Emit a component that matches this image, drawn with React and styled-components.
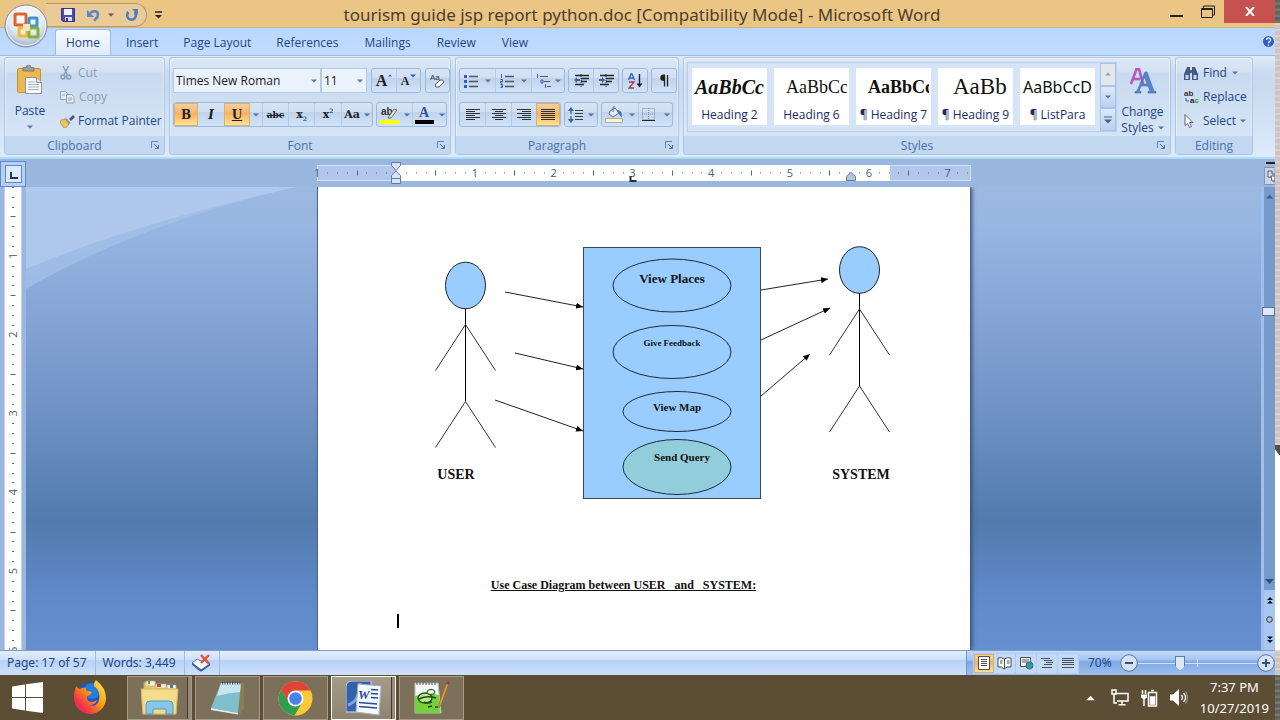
import React from 'react';
import styled, { createGlobalStyle, css } from 'styled-components';

const UI = '"Open Sans", "Noto Sans", sans-serif';
const WIDE = '"Noto Sans", "Open Sans", sans-serif';
const SERIF = '"Liberation Serif", "Times New Roman", serif';

const Global = createGlobalStyle`
  *, *::before, *::after { box-sizing: border-box; }
  html, body { margin: 0; padding: 0; }
  body { font-family: ${UI}; font-size: 12px; line-height: 16px; color: #1d4587; }
  button { font: inherit; color: inherit; margin: 0; padding: 0; border: 0; background: none; }
  svg { display: block; flex: none; }
`;

/* ---------- frame ---------- */
const Screen = styled.div`
  display: grid;
  grid-template-columns: minmax(0, 1fr) 5px;
  height: 100vh;
  overflow: hidden;
  background: #5c4d35;
`;
const WindowFrame = styled.div`
  display: flex;
  flex-direction: column;
  min-width: 0;
  min-height: 0;
`;
const EdgeStrip = styled.div`
  display: flex;
  flex-direction: column;
  > svg { width: 5px; height: 10px; }
`;
const Noise = styled.div`
  flex: ${p => p.$flex || 'none'};
  height: ${p => p.$h || 'auto'};
  background: ${p => p.$dark
    ? 'repeating-linear-gradient(#4e6b62 0 2px, #8d5a70 2px 3px, #6c7f58 3px 5px, #6a557c 5px 6px)'
    : 'repeating-linear-gradient(#e3cfc8 0 2px, #c3cbb0 2px 3px, #d9bfcb 3px 5px, #b9c8cf 5px 6px)'};
`;
const Blank = styled.div`
  flex: 195 0 0;
  background: #fff;
`;

/* ---------- title bar ---------- */
const Header = styled.header`
  position: relative;
  flex: none;
`;
const OfficeButton = styled.button`
  position: absolute;
  left: 4px;
  top: 4px;
  width: 44px;
  height: 44px;
`;
const TitleBar = styled.div`
  display: grid;
  grid-template-columns: 180px minmax(0, 1fr) auto;
  height: 28px;
  background: #ebc583;
  border-bottom: 1px solid #c9b48c;
`;
const QuickAccess = styled.div`
  display: flex;
  align-items: center;
  padding-left: 46px;
`;
const QuickPill = styled.div`
  display: flex;
  align-items: center;
  gap: 6px;
  width: 101px;
  height: 24px;
  padding-left: 14px;
  border: 1px solid #b79a6a;
  border-left-color: transparent;
  border-radius: 0 12px 12px 0;
  background: #e9cb97;
`;
const QuickMore = styled.button`
  margin-left: 8px;
`;
const Title = styled.h1`
  margin: 0;
  padding-right: 56px;
  font-family: ${WIDE};
  font-size: 17px;
  font-weight: 400;
  line-height: 30px;
  color: #4b3f2d;
  text-align: center;
  white-space: nowrap;
`;
const Controls = styled.div`
  display: flex;
  align-items: flex-start;
`;
const ControlButton = styled.button`
  display: flex;
  align-items: center;
  justify-content: center;
  width: ${p => p.$w}px;
  height: 23px;
  background: ${p => (p.$close ? '#c75050' : 'none')};
`;

/* ---------- tabs ---------- */
const TabBar = styled.nav`
  display: flex;
  align-items: flex-end;
  height: 27px;
  padding: 0 0 0 55px;
  background: linear-gradient(#b9d6fd, #c2dcff);
`;
const Tab = styled.button`
  height: 26px;
  padding: 2px ${p => p.$pad || 13}px 0;
  color: #1d4587;
  border-radius: 3px 3px 0 0;
  ${p => p.$active && css`
    margin-right: 2px;
    border: 1px solid #9dbde8;
    border-bottom: 0;
    background: linear-gradient(#f5faff, #e0ebf8);
    padding: 1px 10px 0;
  `}
`;
const HelpButton = styled.button`
  margin: 0 0 7px auto;
`;

/* ---------- ribbon ---------- */
const Ribbon = styled.div`
  display: flex;
  gap: 4px;
  flex: none;
  height: 104px;
  padding: 1px 0 2px 4px;
  background: linear-gradient(#dfeaf7 0, #cbdcf0 16px, #c9daef 30px, #dcebfb 100px);
  border-top: 1px solid #9dbce6;
  border-bottom: 2px solid #b4dbf6;
`;
const GroupBox = styled.section`
  display: flex;
  flex-direction: column;
  width: ${p => p.$w}px;
  border: 1px solid #aac5e6;
  border-radius: 3px;
  box-shadow: inset 0 0 0 1px rgba(255, 255, 255, 0.4);
  background: linear-gradient(#dde8f5 0, #d3e1f2 14px, #c8daef 15px, #d9e8f8 100%);
  overflow: hidden;
`;
const GroupBody = styled.div`
  flex: 1;
  display: flex;
  min-height: 0;
`;
const GroupLabel = styled.footer`
  display: grid;
  grid-template-columns: ${p => (p.$plain ? '0 1fr 0' : '0 1fr 20px')};
  align-items: center;
  height: 18px;
  padding-top: 2px;
  background: #c1d8f0;
  color: #4a70ad;
  text-align: center;
  > span { grid-column: 2; }
  > button { justify-self: end; margin-right: 4px; padding-bottom: 2px; }
`;
const Rows = styled.div`
  display: flex;
  flex-direction: column;
  gap: 9px;
  padding: 10px 3px 0;
`;
const Row = styled.div`
  display: flex;
  gap: ${p => p.$gap || 3}px;
  height: 25px;
`;
const Cluster = styled.div`
  display: flex;
  border: 1px solid #9cb9de;
  border-radius: 3px;
  background: linear-gradient(#d6e4f5 0, #d0dff2 40%, #bfd3ec 41%, #d2e3f6 100%);
  overflow: hidden;
`;
const Tool = styled.button`
  display: flex;
  align-items: center;
  justify-content: center;
  gap: ${p => p.$gap || 5}px;
  width: ${p => p.$w}px;
  border-left: ${p => (p.$sep ? '1px solid #b4cae6' : '0')};
  ${p => p.$active && css`
    background: linear-gradient(#f9d09c 0, #f8bd79 35%, #f9b060 45%, #ffe796 100%);
    box-shadow: inset 0 0 0 1px #d3b27a;
  `}
  ${p => p.$top && css`
    > svg { align-self: flex-start; margin-top: 5px; }
  `}
`;
const Select = styled.select`
  appearance: none;
  width: ${p => p.$w}px;
  padding: 0 2px;
  border: 1px solid #b3cae8;
  border-radius: 0;
  background: transparent;
  font: 12px/22px ${UI};
  color: #1b1b1b;
`;
const SelectWrap = styled.label`
  position: relative;
  display: flex;
  background: #eaf2fb;
  margin-left: ${p => p.$join ? '-4px' : '0'};
  > svg { position: absolute; right: 4px; top: 11px; }
`;

const PasteButton = styled.button`
  display: flex;
  flex-direction: column;
  align-items: center;
  width: 50px;
  padding-top: 7px;
  gap: 8px;
  > svg:last-child { margin-top: -2px; }
`;
const ActionList = styled.div`
  display: flex;
  flex-direction: column;
  padding: 3px 0 0 ${p => p.$pad}px;
`;
const Action = styled.button`
  display: flex;
  align-items: center;
  gap: ${p => p.$gap}px;
  height: 24px;
  color: ${p => (p.$off ? '#8d9cb1' : '#1d4587')};
  white-space: nowrap;
`;

const Gallery = styled.div`
  display: flex;
  margin: 4px 0 0 3px;
  height: 70px;
  border: 1px solid #b9d0ec;
  background: #d5e4f6;
`;
const Cards = styled.div`
  display: flex;
  gap: 7px;
  padding: 5px 5px 5px 4px;
`;
const StyleCard = styled.button`
  display: flex;
  flex-direction: column;
  align-items: center;
  justify-content: flex-start;
  gap: 6px;
  width: 75px;
  height: 57px;
  padding: 6px 2px 0;
  background: #fff;
  color: #1c2a66;
  overflow: hidden;
  white-space: nowrap;
`;
const Sample = styled.span`
  flex: none;
  width: 71px;
  height: 27px;
  overflow: hidden;
  color: #111;
  text-align: left;
  padding-left: ${p => p.$pad || 0}px;
  font: ${p => p.$font};
  line-height: 26px;
`;
const GalleryScroll = styled.div`
  display: grid;
  grid-template-rows: 1fr 1fr 1fr;
  width: 16px;
`;
const ScrollStep = styled.button`
  display: flex;
  align-items: center;
  justify-content: center;
  border: 1px solid #a9c3e6;
  background: ${p => (p.$off ? '#e3e6ea' : 'linear-gradient(#dce9f9, #b9d1f0)')};
`;
const ChangeStyles = styled.button`
  display: flex;
  flex-direction: column;
  align-items: center;
  justify-content: flex-start;
  width: 51px;
  padding-top: 10px;
  gap: 10px;
  white-space: nowrap;
`;
const InlineCaret = styled.span`
  display: flex;
  align-items: center;
  gap: 4px;
`;

/* ---------- rulers and document ---------- */
const RulerBar = styled.div`
  display: grid;
  grid-template-columns: 26px minmax(0, 1fr) 14px;
  flex: none;
  height: 28px;
  background: #9ab7df;
`;
const RulerCenter = styled.div`
  display: flex;
  justify-content: center;
`;
const CornerButton = styled.button`
  display: flex;
  align-items: center;
  justify-content: center;
  align-self: end;
  height: 26px;
  border: 1px solid #5f88cc;
  background: #b7cff2;
`;
const RulerToggle = styled.button`
  display: flex;
  flex-direction: column;
  justify-content: flex-end;
  padding: 0 0 1px 3px;
`;
const Workspace = styled.div`
  display: grid;
  grid-template-columns: 26px minmax(0, 1fr) 14px;
  flex: 1;
  min-height: 0;
`;
const SideRuler = styled.div`
  overflow: hidden;
  background: #9ab7df;
`;
const Canvas = styled.main`
  position: relative;
  display: flex;
  justify-content: center;
  min-width: 0;
  overflow: hidden;
  background: linear-gradient(#9cb9e1 0, #98b6e2 8%, #84a5d5 28%, #7294c6 46%, #527bae 72%, #5f89c8 88%, #668fd0 100%);
`;
const Swoosh = styled.svg`
  position: absolute;
  left: 0;
  top: 0;
`;
const Paper = styled.article`
  position: relative;
  width: 652px;
  background: #fff;
  box-shadow: -1px 0 0 #4c668f, 2px 0 4px #344c70;
  overflow: hidden;
`;
const Caption = styled.p`
  margin: 69px 40px 0 0;
  font: 700 12px/18px ${SERIF};
  color: #111;
  text-align: center;
  text-decoration: underline;
  white-space: pre;
`;
const InsertionPoint = styled.div`
  width: 2px;
  height: 14px;
  margin: 20px 0 0 79px;
  background: #000;
`;
const ScrollColumn = styled.div`
  display: flex;
  flex-direction: column;
  background: #769bcb;
  border-left: 3px solid #9fc0ee;
`;
const ScrollTrack = styled.div`
  flex: 1;
  display: flex;
  flex-direction: column;
  justify-content: space-between;
  align-items: center;
  padding: 7px 0 6px;
`;
const ScrollThumb = styled.div`
  align-self: stretch;
  height: 9px;
  border: 1px solid #55749e;
  background: #dfe8f5;
  margin-left: -2px;
`;
const Spacer = styled.div`
  flex: ${p => p.$n} 0 0;
`;
const Browse = styled.div`
  display: flex;
  flex-direction: column;
  align-items: center;
  justify-content: space-around;
  height: 60px;
  background: #a9c7f3;
`;

/* ---------- status bar ---------- */
const StatusBar = styled.footer`
  display: flex;
  flex: none;
  height: 25px;
  border-top: 1px solid #7e9cc6;
  background: linear-gradient(#e1edfc 0, #cfe1f9 35%, #b7d1f5 40%, #cfe2fb 100%);
  font-family: ${WIDE};
`;
const StatusItem = styled.span`
  display: flex;
  align-items: center;
  padding: 0 8px 0 7px;
  border-right: 1px solid #9cbbe6;
  white-space: nowrap;
`;
const StatusRight = styled.div`
  display: flex;
  align-items: center;
  margin-left: auto;
  padding-left: 6px;
  border-left: 1px solid #6e95d0;
  background: linear-gradient(#c4dafa 0, #a6c5f1 35%, #7fa9e4 45%, #9dbff0 100%);
`;
const Views = styled.div`
  display: flex;
  height: 21px;
  background: #c3d9f8;
  border: 1px solid #b3cdf2;
`;
const ZoomText = styled.span`
  width: 41px;
  padding-left: 9px;
  white-space: nowrap;
`;
const Zoom = styled.input`
  appearance: none;
  width: 119px;
  height: 20px;
  margin: 0;
  background:
    linear-gradient(#d9e7fb, #d9e7fb) center / 1px 8px no-repeat,
    linear-gradient(#cfe0f8, #cfe0f8) center / 100% 1px no-repeat;
  &::-webkit-slider-thumb {
    appearance: none;
    width: 10px;
    height: 15px;
    border: 1px solid #5d7cab;
    background: #dce8f8;
    clip-path: polygon(0 0, 100% 0, 100% 70%, 50% 100%, 0 70%);
  }
`;

/* ---------- taskbar ---------- */
const TaskBar = styled.footer`
  display: flex;
  flex: none;
  height: 45px;
  background: #5c4d35;
  color: #fff;
`;
const Launch = styled.button`
  display: flex;
  align-items: center;
  justify-content: center;
  width: ${p => p.$w}px;
`;
const Running = styled.button`
  display: flex;
  align-items: center;
  justify-content: center;
  width: 65px;
  margin: 1px 3px 0 0;
  border: 1px solid ${p => (p.$active ? '#fff' : '#a59a87')};
  background: ${p => (p.$active ? 'linear-gradient(#a59b88, #8f8470)' : '#7d705b')};
  box-shadow: ${p => (p.$stack ? 'inset -4px 0 0 -1px #978b77, inset -5px 0 0 -1px #453a28' : 'none')};
`;
const Tray = styled.div`
  display: flex;
  align-items: center;
  gap: 12px;
  margin-left: auto;
  padding-right: 6px;
  > svg:first-child { margin-right: 4px; }
`;
const Clock = styled.time`
  display: block;
  font-family: ${WIDE};
  font-size: 13px;
  line-height: 21px;
  text-align: center;
  white-space: nowrap;
`;

/* ---------- icons ---------- */
const Caret = ({ c = '#56749f' }) => (
  <svg width="6" height="4" viewBox="0 0 6 4"><path d="M0 .5h6L3 3.5z" fill={c} /></svg>
);
const CaretUp = ({ c = '#56749f', w = 6, h = 4 }) => (
  <svg width={w} height={h} viewBox="0 0 6 4"><path d="M0 3.5h6L3 .5z" fill={c} /></svg>
);
const Launcher = () => (
  <button aria-label="More options">
    <svg width="9" height="9" viewBox="0 0 9 9" fill="none" stroke="#6484b2">
      <path d="M.5 7V.5H7" /><path d="M3 3l4 4M7.5 4v3.5H4" stroke="#4f6f9f" />
    </svg>
  </button>
);
const OfficeLogo = () => (
  <svg width="44" height="44" viewBox="0 0 44 44">
    <defs>
      <radialGradient id="orb" cx=".5" cy=".3" r=".75"><stop offset="0" stopColor="#fff" /><stop offset=".55" stopColor="#e4e9f1" /><stop offset="1" stopColor="#9aa9c4" /></radialGradient>
    </defs>
    <circle cx="22" cy="22" r="21" fill="url(#orb)" stroke="#8090ac" />
    <circle cx="22" cy="22" r="19.5" fill="none" stroke="#fff" strokeOpacity=".8" />
    <g fill="none" strokeWidth="3">
      <rect x="11" y="10" width="11" height="11" rx="1" stroke="#dc6334" />
      <rect x="25" y="14" width="8" height="8" rx="1" stroke="#3c94cf" />
      <rect x="15" y="24" width="8" height="8" rx="1" stroke="#eebb2c" />
      <rect x="25" y="24" width="9" height="9" rx="1" stroke="#84b13b" />
    </g>
    <path d="M19 20h7v7h-7z" fill="#f5e7bd" />
  </svg>
);
const Save = () => (
  <svg width="14" height="14" viewBox="0 0 14 14"><path d="M.5.5h13v13H2L.5 12z" fill="#4b4cae" stroke="#34358b" /><path d="M3 1h8v6H3z" fill="#eef2fb" /><path d="M4 9h7v4H4z" fill="#d8dcea" /><path d="M5 10h2v3H5z" fill="#34358b" /></svg>
);
const Undo = () => (
  <svg width="13" height="13" viewBox="0 0 13 13" fill="none" stroke="#5a86ca" strokeWidth="2.6"><path d="M3 4c4-3 8-2 8 1.500s-2 4-4 6" /><path d="M0 1v7h7z" fill="#5a86ca" stroke="none" /></svg>
);
const Redo = () => (
  <svg width="13" height="13" viewBox="0 0 13 13" fill="none" stroke="#4d7cc6" strokeWidth="2.6"><path d="M3.500 3a4.400 4.400 0 1 0 6 0" /><path d="M7 0h6v6z" fill="#4d7cc6" stroke="none" /></svg>
);
const PasteIcon = () => (
  <svg width="26" height="30" viewBox="0 0 26 30">
    <rect x=".5" y="3.500" width="23" height="24" rx="1.500" fill="#eeb850" stroke="#c9923a" />
    <path d="M6 2.500h3a2.500 2.500 0 0 1 5 0h3V6H6z" fill="#9d9d9d" stroke="#686868" strokeWidth=".7" />
    <path d="M8.500 12.500h11l5 5v11h-16z" fill="#f8fafd" stroke="#8a95a8" /><path d="M19.500 12.500v5h5" fill="#dde4ee" stroke="#8a95a8" />
    <path d="M11 17h7M11 19.500h11M11 22h11M11 24.500h11" stroke="#a9b1bf" />
  </svg>
);
const CutIcon = () => (
  <svg width="12" height="14" viewBox="0 0 12 14" fill="none" stroke="#8798b3" strokeWidth="1.400"><path d="M3 0l4.500 9M8.500 0L4 9" /><circle cx="3" cy="11" r="2" /><circle cx="8.700" cy="11" r="2" /></svg>
);
const CopyIcon = () => (
  <svg width="15" height="14" viewBox="0 0 15 14" fill="#e5ebf4" stroke="#94a3ba"><path d="M.5 1.500h5l2 2v6h-7z" /><path d="M6.500 4.500h5l2.500 2v6.500H6.500z" /><path d="M2 5h3M8 8h4M8 10h4" /></svg>
);
const BrushIcon = () => (
  <svg width="15" height="13" viewBox="0 0 15 13"><path d="M9 4l4-4 2 2-4 4z" fill="#4e5472" /><path d="M6 3l5 5-2 1-4-5z" fill="#8c96b8" /><path d="M1 5c2 0 3-1 4-1l4 5c-1 2-3 4-5 4L0 8z" fill="#eec65a" stroke="#a5813a" strokeWidth=".7" /></svg>
);
const ListIcon = ({ kind }) => (
  <svg width="15" height="14" viewBox="0 0 15 14">
    {kind === 'multi' ? (
      <g><path d="M4 2.500h8M8 7.500h6M11 12.500h4" stroke="#4d5562" /><path d="M1.500 0v4M5 6h2v3H5zM9.500 10v4" stroke="#355fae" fill="none" /></g>
    ) : (
      <g><path d="M5 2.500h9M5 7.500h9M5 12.500h9" stroke="#4d5562" strokeWidth="1.300" />
        {kind === 'num' ? <path d="M1.500 0v4M.5 5.500h2v2h-2v1.500h2M.5 10.500h2v3h-2M1 12h1.500" stroke="#355fae" fill="none" />
          : <path d="M0 1h3v3H0zM0 6h3v3H0zM0 11h3v3H0z" fill="#355fae" />}</g>
    )}
  </svg>
);
const IndentIcon = ({ more }) => (
  <svg width="15" height="13" viewBox="0 0 15 13"><path d="M1 1.500h14M7 4.500h8M7 7.500h6M1 10.500h9" stroke="#20242b" strokeWidth="1.500" /><path d="M7 0v13" stroke="#20242b" strokeDasharray="1 1" /><path d={more ? 'M0 5h3V3l3 3-3 3V7H0z' : 'M6 5H3V3L0 6l3 3V7h3z'} fill="#355fae" /></svg>
);
const AlignIcon = ({ xs }) => (
  <svg width="14" height="12" viewBox="0 0 14 12" shapeRendering="crispEdges"><path d={xs.map(([a, b], i) => `M${a} ${i * 2 + 0.5}H${b}`).join('')} stroke="#2d3036" /></svg>
);
const L = [[0, 14], [0, 9], [0, 14], [0, 9], [0, 14], [0, 9]];
const C = [[0, 14], [3, 11], [0, 14], [3, 11], [0, 14], [3, 11]];
const R = [[0, 14], [5, 14], [0, 14], [5, 14], [0, 14], [5, 14]];
const J = [[0, 14], [0, 14], [0, 14], [0, 14], [0, 14], [0, 14]];
const SortIcon = () => (
  <svg width="15" height="16" viewBox="0 0 15 16" fill="none"><path d="M.5 7L3.500 0l3 7M1.500 5h4" stroke="#355fae" strokeWidth="1.300" /><path d="M1 9h5l-5 6h5" stroke="#a33c4a" strokeWidth="1.300" /><path d="M11.500 1v11" stroke="#222" strokeWidth="1.400" /><path d="M8.500 10.500h6l-3 4z" fill="#222" /></svg>
);
const PilcrowIcon = () => (
  <svg width="10" height="13" viewBox="0 0 10 13"><path d="M10 .5H4a3.300 3.300 0 0 0 0 6.500h2V.5z" fill="#222" /><path d="M5.500 1v11.500M8.500 1v11.500" stroke="#222" strokeWidth="1.300" /></svg>
);
const SpacingIcon = () => (
  <svg width="15" height="16" viewBox="0 0 15 16"><path d="M3 2v12" stroke="#355fae" strokeWidth="1.300" strokeDasharray="5 2" /><path d="M0 4l3-4 3 4zM0 12l3 4 3-4z" fill="#355fae" /><path d="M7 3.500h8M7 6.500h8M7 9.500h8M7 12.500h8" stroke="#3c4350" /></svg>
);
const BucketIcon = () => (
  <svg width="18" height="17" viewBox="0 0 18 17"><path d="M5 5l5-3 4 5-6 4-4-3z" fill="#e8edf5" stroke="#5a6d8d" /><path d="M8 6V1.500q1.500-2 2 0" fill="none" stroke="#5a6d8d" /><path d="M12 4c4 0 5 3 5 7-2 0-2-3-4-4z" fill="#3f6fb9" /><path d="M.5 12.500h17v4H.5z" fill="#fdf6c4" stroke="#8d93a0" strokeWidth=".7" /></svg>
);
const BorderIcon = () => (
  <svg width="13" height="13" viewBox="0 0 13 13" fill="none"><path d="M.5.500h12v11H.5zM6.500 0v12M0 6h13" stroke="#7d8da8" strokeDasharray="1 1" /><path d="M0 12.500h13" stroke="#222" /></svg>
);
const Glyph = styled.span`
  font: ${p => p.$i ? 'italic ' : ''}700 ${p => p.$s || 13}px/16px "DejaVu Serif", ${SERIF};
  color: #1b1f27;
  text-decoration: ${p => p.$deco || 'none'};
  sub, sup { font-size: 6px; color: #355fae; line-height: 0; }
`;
const PlainGlyph = styled(Glyph)`
  font-family: ${SERIF};
`;
const ColourMark = styled.span`
  display: flex;
  flex-direction: column;
  align-items: center;
  width: 19px;
  border-bottom: 4px solid ${p => p.$c};
  font: 700 14px/14px ${SERIF};
  color: ${p => p.$t};
`;
const HighlightIcon = () => (
  <svg width="18" height="14" viewBox="0 0 18 14"><text x="1" y="9" fontSize="10" fontFamily="Liberation Sans, sans-serif" fill="#333">ab</text><path d="M8 12l6-9 3 1-6 8z" fill="#ece9cf" stroke="#555" strokeWidth=".8" /></svg>
);
const EraserIcon = () => (
  <svg width="16" height="16" viewBox="0 0 16 16"><text x="0" y="7" fontSize="8" fontFamily="Liberation Sans, sans-serif" fill="#333">Aa</text><path d="M5 12l5-5q3-1 4 2l-5 5q-4 1-4-2z" fill="#fff" stroke="#556" /></svg>
);
const StylesIcon = () => (
  <svg width="28" height="26" viewBox="0 0 28 26"><path d="M2 16L7.500 1h2.500L14 16M4 11h7" fill="none" stroke="#b15bb6" strokeWidth="2.600" /><path d="M6 25v-1.500l2-.5 8-19h2l7 19 2 .5V25h-8v-1.500l2-.5-2-5h-7l-2 5 2 .5V25zM12.500 16h5.500l-2.500-7z" fill="#5586cd" fillRule="evenodd" stroke="#3f6bae" strokeWidth=".6" /></svg>
);
const FindIcon = () => (
  <svg width="14" height="13" viewBox="0 0 14 13"><path d="M3 0h3v3h2V0h3l3 7v6H8V6H6v7H0V7z" fill="#445a80" /><path d="M1.500 8h3v4h-3zM9.500 8h3v4h-3z" fill="#c7d6ee" /></svg>
);
const ReplaceIcon = () => (
  <svg width="15" height="14" viewBox="0 0 15 14" fontFamily="Liberation Sans, sans-serif" fontSize="8" fontWeight="700"><text x="0" y="6" fill="#333">ab</text><text x="6" y="13" fill="#222">a<tspan fill="#2a9a3c">c</tspan></text><path d="M2 8v3h3" fill="none" stroke="#355fae" /></svg>
);
const PointerIcon = () => (
  <svg width="11" height="14" viewBox="0 0 11 14"><path d="M1 .5v11l2.500-2 2 4 2-1-2-4H9z" fill="#fff" stroke="#5b6678" /></svg>
);
const HelpIcon = () => (
  <svg width="13" height="13" viewBox="0 0 13 13"><circle cx="6.500" cy="6.500" r="6" fill="#2a60c8" stroke="#d7e5fb" /><path d="M4.500 5a2 2 0 1 1 3 1.700q-1 .5-1 1.500M6.500 9.500v1.300" fill="none" stroke="#fff" strokeWidth="1.300" /></svg>
);
const RoundIcon = ({ plus }) => (
  <svg width="18" height="18" viewBox="0 0 18 18"><circle cx="9" cy="9" r="8.300" fill="#d4e2f6" stroke="#60779c" /><path d={plus ? 'M5 9h8M9 5v8' : 'M5 9h8'} stroke="#3d5070" strokeWidth="2" /></svg>
);
const ProofIcon = () => (
  <svg width="19" height="18" viewBox="0 0 19 18"><path d="M0 9l5-4 4 2 5-2 4 5-8 6-2-1z" fill="#f4f7fc" stroke="#5b7db8" /><path d="M0 9.500l7 6 2 1 9-6" fill="none" stroke="#3f62a4" strokeWidth="2" /><path d="M9 1l8 9M17 1L9 9" stroke="#e2523a" strokeWidth="2.400" /></svg>
);
const ViewIcon = ({ k }) => (
  <svg width="15" height="14" viewBox="0 0 15 14" fill="none" stroke="#4a4f58">
    {k === 0 && <g><path d="M1.500.500h11v13h-11z" fill="#fff" /><path d="M4 3.500h6M4 5.500h6M4 7.500h6M4 9.500h6" /></g>}
    {k === 1 && <g><path d="M1 2q4-1 6 1 3-2 7-1v9q-4-1-7 2-2-3-6-2z" fill="#fff" /><path d="M7.500 3v10M3 5h2.500M3 7h2.500M10 5h2.500M10 7h2.500" /></g>}
    {k === 2 && <g><path d="M1.500 1.500h10v9h-10z" fill="#fff" /><path d="M3 4h7M3 6h7" /><circle cx="10.500" cy="9.500" r="3.500" fill="#3f9a84" stroke="#2f65ad" /></g>}
    {k === 3 && <path d="M1 2.500h9M4 4.500h8M6 6.500h7M4 8.500h8M2 11.500h10" />}
    {k === 4 && <path d="M1 2.500h12M1 4.500h12M1 6.500h12M1 8.500h12M1 11.500h12" />}
  </svg>
);

const StartIcon = () => (
  <svg width="31" height="31" viewBox="0 0 31 31" fill="#fff"><path d="M0 4.500L13 2.500v12.500H0zM14 2.300L31 0v15H14zM0 16h13v12.500L0 26.500zM14 16h17v15L14 28.700z" /></svg>
);
const FirefoxIcon = () => (
  <svg width="35" height="35" viewBox="0 0 35 35">
    <defs><linearGradient id="fox" x1="1" y1="0" x2="0" y2="1"><stop offset="0" stopColor="#fff44f" /><stop offset=".45" stopColor="#ff980e" /><stop offset=".75" stopColor="#f5344b" /><stop offset="1" stopColor="#d5148a" /></linearGradient></defs>
    <circle cx="17" cy="16" r="13.500" fill="#2b50c8" /><circle cx="19" cy="11" r="8" fill="#1e7fe0" />
    <path d="M3 6q1 2 4 3 3-2 6-1-1 3 2 3l4 1q-1 3-5 4-1 5 4 6 4 0 6-2-2 6-9 5 9 3 11-5 2-9-5-14 0-4 2-6 10 8 10 18a16 16 0 0 1-32 0Q1 11 3 6z" fill="url(#fox)" />
  </svg>
);
const FolderIcon = () => (
  <svg width="38" height="36" viewBox="0 0 38 36">
    <path d="M3 2h11l2 4h19v28H2z" fill="#e9c868" stroke="#b99a45" /><path d="M5 1h9v5H5zM15 4h10v4H15zM26 5h9v4h-9z" fill="#f7f3dd" stroke="#b8a877" strokeWidth=".6" />
    <path d="M7 1h2v3H7z" fill="#4a9c55" /><path d="M16 4h4v3h-4z" fill="#d0433a" /><path d="M29 5h3v3h-3z" fill="#4079b8" />
    <path d="M0 9h37l-2 25H2z" fill="#f3dd8d" stroke="#d3b661" />
    <path d="M5 34V25q0-4 4-4h19q4 0 4 4v9h-7v-5H12v5z" fill="#86c6ea" stroke="#4f9aca" />
  </svg>
);
const NotepadIcon = () => (
  <svg width="35" height="34" viewBox="0 0 35 34"><path d="M29 2l5-1v27l-4 5-3-1z" fill="#8a7c55" /><path d="M11 2h20l-3 30L1 27z" fill="#7fbfcd" /><path d="M11 2h20l-1 9Q18 12 7 15z" fill="#c5e6ec" /><path d="M1 27l27 5v1.500L1 29z" fill="#e5f2f3" /><path d="M12 2h20" stroke="#444" strokeWidth="3" strokeDasharray="1 1.500" /></svg>
);
const ChromeIcon = () => (
  <svg width="35" height="35" viewBox="0 0 35 35"><circle cx="17.500" cy="17.500" r="17" fill="#fbc933" /><path d="M2.800 9A17 17 0 0 1 32.500 9.500H17.500L11 21z" fill="#e04436" /><path d="M2.800 9A17 17 0 0 0 16.500 34.500L24 22 17 25 11 21z" fill="#2f9e50" /><circle cx="17.500" cy="17.500" r="8" fill="#fff" /><circle cx="17.500" cy="17.500" r="6.300" fill="#4a80ec" /></svg>
);
const WordIcon = () => (
  <svg width="36" height="35" viewBox="0 0 36 35"><path d="M6 0h19v31H0V5q1-5 6-5z" fill="#3560ab" stroke="#cfdcf2" /><path d="M2 24Q14 20 14 2" fill="none" stroke="#7da3dc" strokeWidth="3" /><path d="M12 3l23 2-2 29-23-3z" fill="#f7f9fd" stroke="#9fb2d2" /><text x="12" y="18" fontFamily="Liberation Serif, serif" fontWeight="700" fontStyle="italic" fontSize="13" fill="#234d9d">W</text><path d="M25 8.500l7 .5M25 12.500l7 .5M25 16.500l7 .5M13 21.500l18 1.500M13 25.500l18 1.500" stroke="#234d9d" strokeWidth="1.600" /></svg>
);
const NppIcon = () => (
  <svg width="36" height="34" viewBox="0 0 36 34"><path d="M1 2h23l3 30H1z" fill="#f5f8f3" stroke="#b8c0b2" /><path d="M1 15q12-4 24-1l1 18H1z" fill="#77cf3e" /><path d="M3 1v3M6 1v3M9 1v3M12 1v3M15 1v3M18 1v3M21 1v3" stroke="#555" /><ellipse cx="11" cy="17" rx="7" ry="5" fill="#b7e88a" stroke="#1f4d1c" strokeWidth="1.300" /><ellipse cx="17" cy="11" rx="4" ry="2.500" fill="#e9f6df" stroke="#1f4d1c" /><path d="M5 18q8-4 17-1M10 21q3 2 8 0M14 26l4-1M21 26l3 0" fill="none" stroke="#1f4d1c" strokeWidth="1.600" /><path d="M35 2L27 24l-2 3v-4L33 1z" fill="#e5a33a" stroke="#8a5a22" strokeWidth=".6" /><circle cx="34" cy="2" r="1.500" fill="#9b3a34" /></svg>
);
const NetworkIcon = () => (
  <svg width="18" height="17" viewBox="0 0 18 17" fill="none" stroke="#fff" strokeWidth="1.500"><path d="M5 4.500h12v7.500H6M11 12v3M7.500 15.700h7" /><path d="M1 1h4v4H1zM3 5v9h3" /></svg>
);
const BatteryIcon = () => (
  <svg width="17" height="18" viewBox="0 0 17 18" fill="none" stroke="#fff" strokeWidth="1.500"><path d="M7.500 3.500h8v13.500h-8zM10 1.500h3" /><path d="M9.500 8h4v7h-4z" fill="#fff" /><path d="M1.500 1v4M4.500 1v4M3 10v7" /><path d="M0 5.500h6v3L4 10H2L0 8.500z" fill="#fff" stroke="none" /></svg>
);
const SoundIcon = () => (
  <svg width="18" height="17" viewBox="0 0 18 17" fill="none" stroke="#fff"><path d="M0 5.500h3L9 0v17l-6-5.500H0z" fill="#fff" stroke="none" /><path d="M11.500 6q2 2.500 0 5M13.500 4q4 4.500 0 9" strokeWidth="1.300" /><path d="M15.500 2.500q4 6 0 12" strokeOpacity=".5" /></svg>
);

/* ---------- rulers ---------- */
const INCH = 78.8;
const HorizontalRuler = () => {
  const zero = 84;
  const ticks = [];
  for (let i = -7; i <= 58; i++) if (i % 8 !== 0) ticks.push(i);
  return (
    <svg width="664" height="28" viewBox="0 1 664 28">
      <rect x="5.500" y="7.500" width="653" height="15" fill="#b1c8ec" stroke="#d3e2f7" />
      <rect x={zero} y="7" width="494" height="16" fill="#fff" />
      {ticks.map(i => {
        const x = Math.round(zero + (i * INCH) / 8) + 0.5;
        return i % 4 === 0
          ? <path key={i} d={`M${x} 12.500v5`} stroke="#55627c" />
          : <path key={i} d={`M${x} 14.500v1`} stroke="#55627c" />;
      })}
      <g fontFamily={UI} fontSize="11" fill="#505a70" textAnchor="middle">
        {[-1, 1, 2, 3, 4, 5, 6, 7].map(n => <text key={n} x={zero + n * INCH} y="19">{Math.abs(n)}</text>)}
      </g>
      <path d="M318.500 18v5h6" fill="none" stroke="#222e48" strokeWidth="2" />
      <g fill="#d8e4f5" stroke="#607ba6">
        <path d="M79.500 4.500h9v3l-4.500 5-4.500-5z" /><path d="M79.500 20.500v-3l4.500-4.500 4.500 4.500v3z" /><path d="M79.500 20.500h9v5h-9z" />
        <path d="M534.500 22.500v-4l4.500-4 4.500 4v4z" fill="#b6c4d8" />
      </g>
    </svg>
  );
};
const VerticalRuler = () => {
  const zero = -10;
  const ticks = [];
  for (let i = 1; i < 100; i++) if (i % 8 !== 0) ticks.push(i);
  return (
    <svg width="26" height="1000" viewBox="0 0 26 1000">
      <rect x="5" width="16" height="1000" fill="#fff" /><path d="M4.500 0v1000M21.500 0v1000" stroke="#bfd3f1" />
      {ticks.map(i => {
        const y = Math.round(zero + (i * INCH) / 8) + 0.5;
        return <path key={i} d={i % 4 === 0 ? `M10.500 ${y}h5` : `M12 ${y}h2`} stroke="#55627c" />;
      })}
      <g fontFamily={UI} fontSize="11" fill="#505a70" textAnchor="middle">
        {[1, 2, 3, 4, 5, 6].map(n => <text key={n} transform={`translate(17 ${zero + n * INCH}) rotate(-90)`}>{n}</text>)}
      </g>
    </svg>
  );
};

/* ---------- use case diagram ---------- */
const Actor = ({ x, y }) => (
  <g fill="none" stroke="#333" strokeWidth="1">
    <ellipse cx={x} cy={y} rx="20" ry="23.300" fill="#99ccff" stroke="#222" />
    <path d={`M${x} ${y + 23}V${y + 116}`} stroke="#000" />
    <path d={`M${x - 30} ${y + 85}L${x} ${y + 39}L${x + 30} ${y + 85}M${x - 30} ${y + 162}L${x} ${y + 116}L${x + 30} ${y + 162}`} />
  </g>
);
const arrows = [
  [505, 292, 583, 307], [515, 353, 583, 369], [495, 400, 583, 431],
  [761, 290, 828, 279], [761, 340, 830, 308], [761, 396, 810, 354],
];
const useCases = [
  { cx: 672, cy: 285.500, rx: 59, ry: 26.500, label: 'View Places', tx: 672, ty: 283, size: 13 },
  { cx: 672, cy: 352, rx: 59, ry: 26.500, label: 'Give Feedback', tx: 672, ty: 346, size: 9 },
  { cx: 677, cy: 411.500, rx: 54, ry: 20, label: 'View Map', tx: 677, ty: 411, size: 11 },
  { cx: 677, cy: 467, rx: 54, ry: 27.500, label: 'Send Query', tx: 682, ty: 461, size: 11, fill: '#92cddc' },
];
const Diagram = () => (
  <svg width="652" height="320" viewBox="318 187 652 320" role="img" aria-label="Use case diagram">
    <defs><marker id="tip" markerWidth="8" markerHeight="6" refX="7" refY="3" orient="auto" markerUnits="userSpaceOnUse"><path d="M0 0l7 3-7 3z" fill="#000" /></marker></defs>
    <rect x="583.500" y="247.500" width="177" height="251" fill="#99ccff" stroke="#3c4654" />
    {arrows.map(([a, b, c, d]) => <path key={b} d={`M${a} ${b}L${c} ${d}`} stroke="#222" markerEnd="url(#tip)" />)}
    <Actor x={465.5} y={285.5} />
    <Actor x={859.5} y={270} />
    {useCases.map(u => (
      <g key={u.label}>
        <ellipse cx={u.cx} cy={u.cy} rx={u.rx} ry={u.ry} fill={u.fill || '#99ccff'} stroke="#1d2b3d" />
        <text x={u.tx} y={u.ty} fontSize={u.size} textAnchor="middle" fontFamily={SERIF} fontWeight="700" fill="#111">{u.label}</text>
      </g>
    ))}
    <g fontFamily={SERIF} fontWeight="700" fontSize="14" fill="#111" textAnchor="middle">
      <text x="456" y="479">USER</text><text x="861" y="479">SYSTEM</text>
    </g>
  </svg>
);

const Group = ({ w, label, launcher = true, children }) => (
  <GroupBox $w={w} aria-label={label}>
    <GroupBody>{children}</GroupBody>
    <GroupLabel $plain={!launcher}><span>{label}</span>{launcher && <Launcher />}</GroupLabel>
  </GroupBox>
);

const styles = [
  ['Heading 2', `italic 700 20px ${SERIF}`, 1, 'AaBbCc'],
  ['Heading 6', `18px ${SERIF}`, 10, 'AaBbCc'],
  ['¶ Heading 7', `700 18px ${SERIF}`, 10, 'AaBbCc'],
  ['¶ Heading 9', `23px ${SERIF}`, 13, 'AaBb'],
  ['¶ ListPara', `16px ${WIDE}`, 1, 'AaBbCcD'],
];

export default function App() {
  return (
    <Screen>
      <Global />
      <WindowFrame>
        <Header>
          <TitleBar>
            <QuickAccess>
              <QuickPill>
                <button aria-label="Save"><Save /></button>
                <Tool aria-label="Undo" $w={38} $gap={8}><Undo /><Caret c="#665a46" /></Tool>
                <button aria-label="Redo"><Redo /></button>
              </QuickPill>
              <QuickMore aria-label="Customize toolbar">
                <svg width="7" height="8" viewBox="0 0 7 8"><path d="M0 1h7" stroke="#222" strokeWidth="1.500" /><path d="M0 4h7L3.500 7.500z" fill="#222" /></svg>
              </QuickMore>
            </QuickAccess>
            <Title>tourism guide jsp report python.doc [Compatibility Mode] - Microsoft Word</Title>
            <Controls>
              <ControlButton $w={32} aria-label="Minimize"><svg width="13" height="13" viewBox="0 0 13 13"><path d="M0 11h13" stroke="#222" strokeWidth="2" /></svg></ControlButton>
              <ControlButton $w={32} aria-label="Restore"><svg width="14" height="14" viewBox="0 0 14 14" fill="none" stroke="#222"><path d="M.5 3.500h11v9H.5zM.5 4.500h11M2.500 3V1h11v9h-2" /></svg></ControlButton>
              <ControlButton $w={51} $close aria-label="Close"><svg width="10" height="9" viewBox="0 0 10 9"><path d="M1 0l8 9M9 0L1 9" stroke="#fff" strokeWidth="2" /></svg></ControlButton>
            </Controls>
          </TitleBar>
          <TabBar>
            <Tab $active>Home</Tab>
            <Tab>Insert</Tab><Tab $pad={12}>Page Layout</Tab><Tab>References</Tab><Tab>Mailings</Tab><Tab>Review</Tab><Tab>View</Tab>
            <HelpButton aria-label="Help"><HelpIcon /></HelpButton>
          </TabBar>
          <OfficeButton aria-label="Office menu"><OfficeLogo /></OfficeButton>
        </Header>

        <Ribbon>
          <Group w={161} label="Clipboard">
            <PasteButton><PasteIcon /><span>Paste</span><Caret /></PasteButton>
            <ActionList $pad={5}>
              <Action $off $gap={6}><CutIcon />Cut</Action>
              <Action $off $gap={4}><CopyIcon />Copy</Action>
              <Action $gap={3}><BrushIcon />Format Painter</Action>
            </ActionList>
          </Group>

          <Group w={282} label="Font">
            <Rows>
              <Row $gap={4}>
                <SelectWrap><Select $w={148} aria-label="Font"><option>Times New Roman</option></Select><Caret /></SelectWrap>
                <SelectWrap $join><Select $w={46} aria-label="Font size"><option>11</option></Select><Caret /></SelectWrap>
                <Cluster>
                  <Tool $w={24} $gap={1} $top aria-label="Grow font"><PlainGlyph $s={16}>A</PlainGlyph><CaretUp c="#355fae" w={4} h={3} /></Tool>
                  <Tool $w={24} $gap={1} $sep $top aria-label="Shrink font"><PlainGlyph $s={12}>A</PlainGlyph><Caret c="#355fae" /></Tool>
                </Cluster>
                <Cluster><Tool $w={23} aria-label="Clear formatting"><EraserIcon /></Tool></Cluster>
              </Row>
              <Row>
                <Cluster>
                  <Tool $w={24} $active aria-label="Bold"><Glyph $s={12}>B</Glyph></Tool>
                  <Tool $w={26} aria-label="Italic"><Glyph $s={12} $i>I</Glyph></Tool>
                  <Tool $w={26} $active aria-label="Underline"><Glyph $s={12} $deco="underline">U</Glyph></Tool>
                  <Tool $w={12} aria-label="Underline style"><Caret /></Tool>
                  <Tool $w={26} $sep aria-label="Strikethrough"><Glyph $s={9} $deco="line-through">abc</Glyph></Tool>
                  <Tool $w={26} $sep aria-label="Subscript"><Glyph $s={11}>x<sub>2</sub></Glyph></Tool>
                  <Tool $w={27} $sep aria-label="Superscript"><Glyph $s={11}>x<sup>2</sup></Glyph></Tool>
                  <Tool $w={31} $gap={4} $sep aria-label="Change case"><Glyph $s={11}>Aa</Glyph><Caret /></Tool>
                </Cluster>
                <Cluster>
                  <Tool $w={35} aria-label="Highlight"><ColourMark $c="#ffff00" $t="#333"><HighlightIcon /></ColourMark><Caret /></Tool>
                  <Tool $w={34} $sep aria-label="Font color"><ColourMark $c="#000" $t="#2e5697">A</ColourMark><Caret /></Tool>
                </Cluster>
              </Row>
            </Rows>
          </Group>

          <Group w={224} label="Paragraph">
            <Rows>
              <Row>
                <Cluster>
                  <Tool $w={35} $gap={6} aria-label="Bullets"><ListIcon /><Caret /></Tool>
                  <Tool $w={36} $gap={6} $sep aria-label="Numbering"><ListIcon kind="num" /><Caret /></Tool>
                  <Tool $w={33} $gap={4} $sep aria-label="Multilevel list"><ListIcon kind="multi" /><Caret /></Tool>
                </Cluster>
                <Cluster>
                  <Tool $w={24} aria-label="Decrease indent"><IndentIcon /></Tool>
                  <Tool $w={25} $sep aria-label="Increase indent"><IndentIcon more /></Tool>
                </Cluster>
                <Cluster><Tool $w={24} aria-label="Sort"><SortIcon /></Tool></Cluster>
                <Cluster><Tool $w={24} aria-label="Show marks"><PilcrowIcon /></Tool></Cluster>
              </Row>
              <Row>
                <Cluster>
                  <Tool $w={25} aria-label="Align left"><AlignIcon xs={L} /></Tool>
                  <Tool $w={26} $sep aria-label="Center"><AlignIcon xs={C} /></Tool>
                  <Tool $w={25} $sep aria-label="Align right"><AlignIcon xs={R} /></Tool>
                  <Tool $w={24} $active aria-label="Justify"><AlignIcon xs={J} /></Tool>
                </Cluster>
                <Cluster><Tool $w={32} aria-label="Line spacing"><SpacingIcon /><Caret /></Tool></Cluster>
                <Cluster>
                  <Tool $w={36} $gap={6} aria-label="Shading"><BucketIcon /><Caret /></Tool>
                  <Tool $w={34} $gap={9} $sep aria-label="Borders"><BorderIcon /><Caret /></Tool>
                </Cluster>
              </Row>
            </Rows>
          </Group>

          <Group w={488} label="Styles">
            <Gallery>
              <Cards>
                {styles.map(([name, font, pad, text]) => (
                  <StyleCard key={name}><Sample $font={font} $pad={pad}>{text}</Sample>{name}</StyleCard>
                ))}
              </Cards>
              <GalleryScroll>
                <ScrollStep $off aria-label="Previous styles"><CaretUp c="#9a9fa8" /></ScrollStep>
                <ScrollStep aria-label="Next styles"><Caret /></ScrollStep>
                <ScrollStep aria-label="All styles"><svg width="8" height="8" viewBox="0 0 8 8"><path d="M0 1h8" stroke="#46648f" /><path d="M0 3.500h8L4 7.500z" fill="#46648f" /></svg></ScrollStep>
              </GalleryScroll>
            </Gallery>
            <ChangeStyles><StylesIcon /><span>Change<InlineCaret>Styles <Caret /></InlineCaret></span></ChangeStyles>
          </Group>

          <Group w={78} label="Editing" launcher={false}>
            <ActionList $pad={8}>
              <Action $gap={5}><FindIcon />Find<Caret /></Action>
              <Action $gap={4}><ReplaceIcon />Replace</Action>
              <Action $gap={8}><PointerIcon /><InlineCaret>Select<Caret /></InlineCaret></Action>
            </ActionList>
          </Group>
        </Ribbon>

        <RulerBar>
          <CornerButton aria-label="Tab selector">
            <svg width="17" height="18" viewBox="0 0 17 18"><rect x=".5" y=".5" width="16" height="17" fill="#dce9fb" stroke="#5f88cc" /><path d="M6 7v6h7" fill="none" stroke="#24365c" strokeWidth="2" /></svg>
          </CornerButton>
          <RulerCenter><HorizontalRuler /></RulerCenter>
          <RulerToggle aria-label="View ruler">
            <svg width="11" height="24" viewBox="0 0 11 24"><path d="M2 1h9" stroke="#222" strokeWidth="2" /><path d="M.5 5.500H11v17H.5z" fill="#c9d4e6" stroke="#8195b5" /><path d="M4 9h4v3h3M4 9v6h3M7 14h4v5H8z" fill="#fff" stroke="#4c566a" /></svg>
          </RulerToggle>
        </RulerBar>

        <Workspace>
          <SideRuler><VerticalRuler /></SideRuler>
          <Canvas>
            <Swoosh width="292" height="110" viewBox="0 0 292 110" aria-hidden="true">
              <path d="M0 0h270Q110 38 0 102z" fill="#a5c2ea" fillOpacity=".7" />
              <path d="M0 0h270Q110 36 0 82z" fill="#b9cff0" fillOpacity=".6" />
            </Swoosh>
            <Paper>
              <Diagram />
              <Caption>{'Use Case Diagram between USER   and   SYSTEM:'}</Caption>
              <InsertionPoint />
            </Paper>
          </Canvas>
          <ScrollColumn>
            <ScrollTrack>
              <CaretUp c="#3f5f93" w={9} h={5} />
              <Spacer $n={108} /><ScrollThumb /><Spacer $n={262} />
              <svg width="9" height="5" viewBox="0 0 9 5"><path d="M0 0h9L4.500 5z" fill="#2f4f85" /></svg>
            </ScrollTrack>
            <Browse>
              <button aria-label="Previous page"><svg width="6" height="8" viewBox="0 0 6 8"><path d="M0 4l3-3 3 3zM0 7.500l3-3 3 3z" fill="#111" /></svg></button>
              <button aria-label="Browse object"><svg width="7" height="7" viewBox="0 0 7 7"><circle cx="3.500" cy="3.500" r="2.800" fill="#b9bfca" stroke="#333" /></svg></button>
              <button aria-label="Next page"><svg width="6" height="8" viewBox="0 0 6 8"><path d="M0 .5h6l-3 3zM0 4h6L3 7z" fill="#111" /></svg></button>
            </Browse>
          </ScrollColumn>
        </Workspace>

        <StatusBar>
          <StatusItem>Page: 17 of 57</StatusItem>
          <StatusItem>Words: 3,449</StatusItem>
          <StatusItem><ProofIcon /></StatusItem>
          <StatusRight>
            <Views>
              {[0, 1, 2, 3, 4].map(k => <Tool key={k} $w={k ? 21 : 20} $active={k === 0} $sep={k > 1} aria-label={`View ${k + 1}`}><ViewIcon k={k} /></Tool>)}
            </Views>
            <ZoomText>70%</ZoomText>
            <button aria-label="Zoom out"><RoundIcon /></button>
            <Zoom type="range" min="0" max="100" defaultValue="34" aria-label="Zoom" />
            <button aria-label="Zoom in"><RoundIcon plus /></button>
          </StatusRight>
        </StatusBar>

        <TaskBar>
          <Launch $w={54} aria-label="Start"><StartIcon /></Launch>
          <Launch $w={73} aria-label="Firefox"><FirefoxIcon /></Launch>
          <Running $stack aria-label="File Explorer"><FolderIcon /></Running>
          <Running aria-label="Notepad"><NotepadIcon /></Running>
          <Running aria-label="Chrome"><ChromeIcon /></Running>
          <Running $active $stack aria-label="Word"><WordIcon /></Running>
          <Running aria-label="Notepad++"><NppIcon /></Running>
          <Tray>
            <CaretUp c="#fff" w={9} h={6} />
            <NetworkIcon /><BatteryIcon /><SoundIcon />
            <Clock>7:37 PM<br />10/27/2019</Clock>
          </Tray>
        </TaskBar>
      </WindowFrame>
      <EdgeStrip aria-hidden="true">
        <Noise $dark $h="23px" />
        <Noise $flex="422 0 0" />
        <svg viewBox="0 0 5 10"><path d="M0 0h5v10H4L0 4z" fill="#5d4a42" /><path d="M0 4l4 6H0z" fill="#fff" /></svg>
        <Blank />
        <Noise $h="25px" />
        <Noise $dark $h="45px" />
      </EdgeStrip>
    </Screen>
  );
}
